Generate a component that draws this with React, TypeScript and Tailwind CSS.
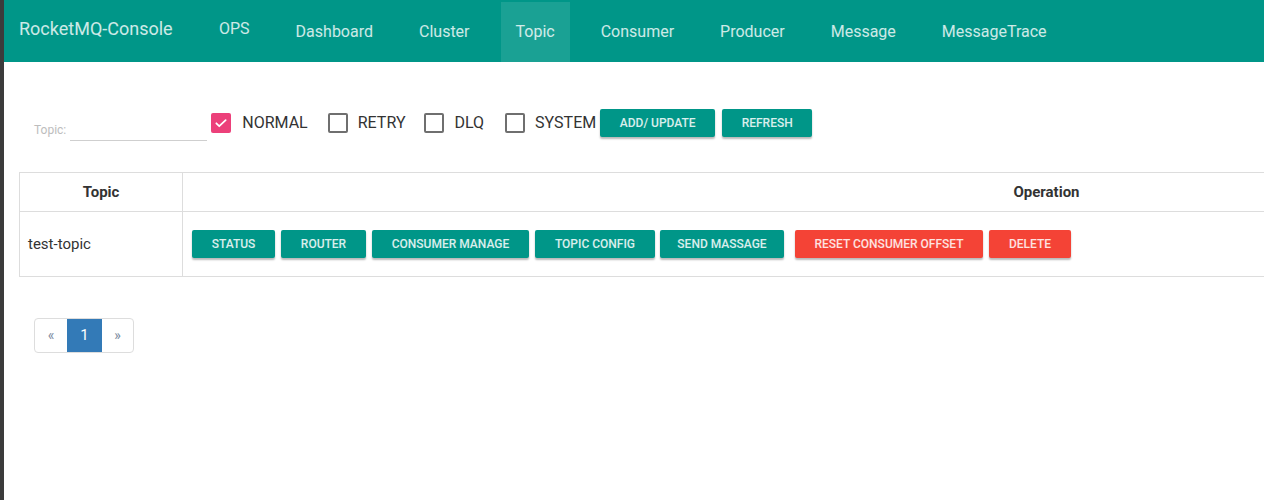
import React from "react";

const navItems = ["Dashboard", "Cluster", "Topic", "Consumer", "Producer", "Message", "MessageTrace"];

function Check({ checked }: { checked?: boolean }) {
  if (checked) {
    return (
      <span className="w-[20px] h-[20px] rounded-[2px] bg-[#ec407a] flex items-center justify-center shrink-0">
        <svg width="14" height="14" viewBox="0 0 24 24" fill="none" stroke="white" strokeWidth="3" strokeLinecap="round" strokeLinejoin="round">
          <path d="M4 12.5l5 5L20 7" />
        </svg>
      </span>
    );
  }
  return <span className="w-[20px] h-[20px] rounded-[2px] border-2 border-[#6f6f6f] shrink-0" />;
}

function Btn({ label, w, red, cls = "" }: { label: string; w: string; red?: boolean; cls?: string }) {
  return (
    <button
      className={`${w} ${cls} h-[28px] rounded-[2px] ${red ? "bg-[#f44336]" : "bg-[#009688]"} text-[12px] font-medium text-white/85 uppercase shadow-[0_2px_2px_rgba(0,0,0,0.28)] flex items-center justify-center shrink-0 whitespace-nowrap`}
    >
      {label}
    </button>
  );
}

export default function App() {
  return (
    <div className="flex w-[1264px] h-[500px] overflow-hidden bg-white" style={{ fontFamily: "Roboto, 'Liberation Sans', sans-serif" }}>
      <div className="w-[4px] shrink-0 bg-[#3b3b3b]" />
      <div className="flex-1 flex flex-col min-w-0 overflow-hidden">
        <header className="h-[62px] bg-[#009688] flex shrink-0">
          <div className="w-[200px] shrink-0 pl-[15px] flex items-center pb-[6px] text-[18px] text-white/80 whitespace-nowrap">
            RocketMQ-Console
          </div>
          <nav className="flex gap-[16px] pt-[2px]">
            <div className="px-[15px] flex items-center pb-[6px] text-[16px] text-white/80">OPS</div>
            {navItems.map((n) => (
              <div
                key={n}
                className={`px-[15px] flex items-center text-[16px] text-white/80 whitespace-nowrap ${n === "Topic" ? "bg-white/10" : ""}`}
              >
                {n}
              </div>
            ))}
          </nav>
        </header>

        <div className="flex items-center h-[28px] mt-[47px] shrink-0">
          <div className="flex items-end self-end mb-[-4px] ml-[30px]">
            <span className="text-[12px] text-[#bdbdbd] mb-[2px]">Topic:</span>
            <div className="w-[137px] ml-[4px] h-[18px] border-b border-[#cfcfcf]" />
          </div>
          <div className="flex items-center ml-[4px]">
            <Check checked />
            <span className="ml-[11px] text-[16px] text-[#333]">NORMAL</span>
          </div>
          <div className="flex items-center ml-[20px]">
            <Check />
            <span className="ml-[10px] text-[16px] text-[#333]">RETRY</span>
          </div>
          <div className="flex items-center ml-[19px]">
            <Check />
            <span className="ml-[10px] text-[16px] text-[#333]">DLQ</span>
          </div>
          <div className="flex items-center ml-[21px]">
            <Check />
            <span className="ml-[10px] text-[16px] text-[#333]">SYSTEM</span>
          </div>
          <Btn label="ADD/ UPDATE" w="w-[115px]" cls="ml-[4px]" />
          <Btn label="REFRESH" w="w-[90px]" cls="ml-[7px]" />
        </div>

        <div className="mt-[35px] ml-[15px] w-[1892px] shrink-0 border border-[#dddddd] grid grid-cols-[163px_1fr]">
          <div className="h-[39px] border-r border-b border-[#dddddd] flex items-center justify-center text-[15px] font-bold text-[#333]">
            Topic
          </div>
          <div className="h-[39px] border-b border-[#dddddd] flex items-center justify-center text-[15px] font-bold text-[#333]">
            Operation
          </div>
          <div className="h-[64px] border-r border-[#dddddd] flex items-center pl-[8px] text-[15px] text-[#333]">
            test-topic
          </div>
          <div className="h-[64px] flex items-center pl-[9px]">
            <Btn label="STATUS" w="w-[83px]" />
            <Btn label="ROUTER" w="w-[85px]" cls="ml-[6px]" />
            <Btn label="CONSUMER MANAGE" w="w-[157px]" cls="ml-[6px]" />
            <Btn label="TOPIC CONFIG" w="w-[120px]" cls="ml-[6px]" />
            <Btn label="SEND MASSAGE" w="w-[124px]" cls="ml-[5px]" />
            <Btn label="RESET CONSUMER OFFSET" w="w-[188px]" cls="ml-[11px]" red />
            <Btn label="DELETE" w="w-[82px]" cls="ml-[6px]" red />
          </div>
        </div>

        <div className="mt-[41px] ml-[30px] flex h-[35px] w-[100px] shrink-0 border border-[#dddddd] rounded-[4px] overflow-hidden text-[14px]">
          <div className="w-[32px] flex items-center justify-center text-[#7a8aa0]">«</div>
          <div className="w-[35px] flex items-center justify-center bg-[#337ab7] text-white text-[15px]">1</div>
          <div className="flex-1 flex items-center justify-center text-[#7a8aa0]">»</div>
        </div>
      </div>
    </div>
  );
}
